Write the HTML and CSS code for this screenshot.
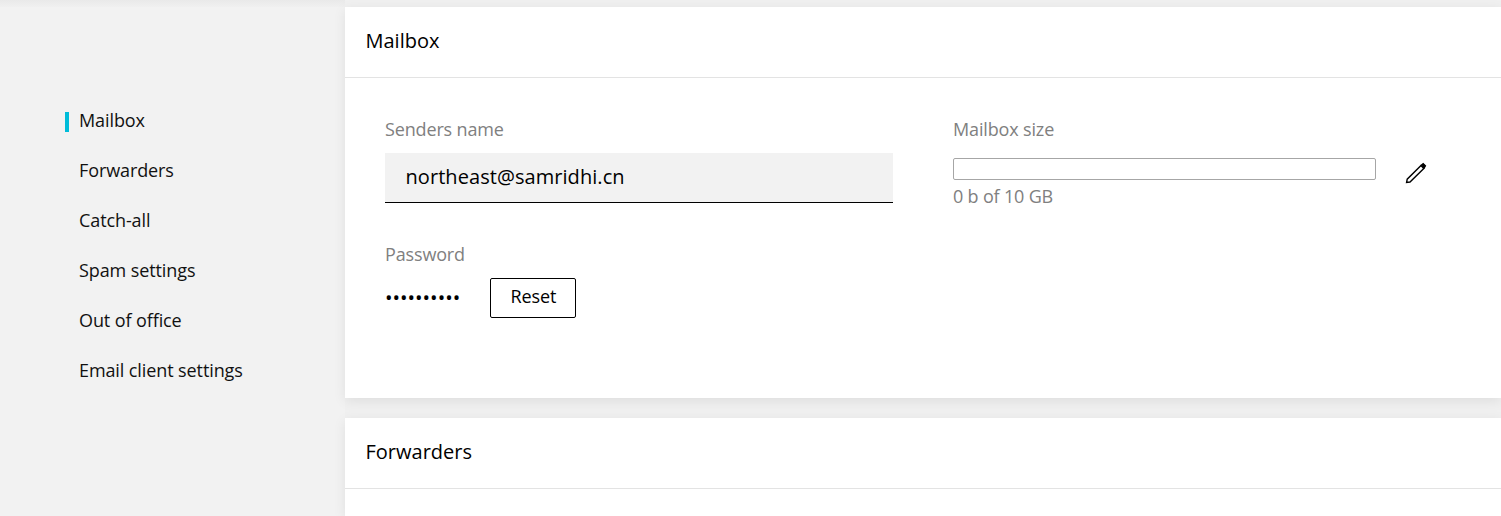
FILE: index.html
```html
<!DOCTYPE html>
<html lang="en">
<head>
<meta charset="utf-8">
<title>Mailbox</title>
<link rel="stylesheet" href="styles.css">
</head>
<body>
<div class="page">
  <nav class="side">
    <a class="nav-item active">Mailbox</a>
    <a class="nav-item">Forwarders</a>
    <a class="nav-item">Catch-all</a>
    <a class="nav-item">Spam settings</a>
    <a class="nav-item">Out of office</a>
    <a class="nav-item">Email client settings</a>
  </nav>
  <main class="main">
    <section class="card card-mailbox">
      <h2 class="card-title">Mailbox</h2>
      <div class="card-body">
        <div class="col-left">
          <div class="label">Senders name</div>
          <div class="input">northeast@samridhi.cn</div>
          <div class="label label-pass">Password</div>
          <div class="pass-row">
            <span class="dots">••••••••••</span>
            <button class="btn">Reset</button>
          </div>
        </div>
        <div class="col-right">
          <div class="label">Mailbox size</div>
          <div class="size-row">
            <div class="bar"></div>
            <svg class="pencil" width="24" height="24" viewBox="0 0 24 24" fill="none" stroke="#000" stroke-width="1.4">
              <path d="M2.6 21.4 L3.2 18.2 L17 4.6 L19.8 7.4 L6 21 Z"/>
              <path d="M17.6 4 L19.2 2.6 L21.4 4.8 L20.2 6.8 Z" fill="#000"/>
            </svg>
          </div>
          <div class="size-text">0 b of 10 GB</div>
        </div>
      </div>
    </section>
    <section class="card">
      <h2 class="card-title">Forwarders</h2>
    </section>
  </main>
</div>
</body>
</html>
```
FILE: styles.css
```css
* { box-sizing: border-box; }
html, body { margin: 0; height: 516px; overflow: hidden; }
body {
  font-family: "Open Sans", "Noto Sans", sans-serif;
  background: #f2f2f2;
  color: #000;
}
.page { display: flex; height: 516px; position: relative; overflow: hidden; }
.page::before {
  content: "";
  position: absolute;
  inset: 0 0 auto 0;
  height: 7px;
  background: linear-gradient(#e9e9e9, #f0f0f0);
}
.side {
  width: 345px;
  flex: none;
  padding: 95px 0 0 65px;
  display: flex;
  flex-direction: column;
}
.nav-item {
  display: block;
  height: 50px;
  line-height: 50px;
  padding-left: 14px;
  font-size: 18px;
  letter-spacing: -0.1px;
  color: #111;
  position: relative;
}
.nav-item.active::before {
  content: "";
  position: absolute;
  left: 0;
  top: 17px;
  width: 4px;
  height: 20px;
  background: #00bcd9;
}
.main {
  flex: 1;
  min-width: 0;
  padding-top: 7px;
  display: flex;
  flex-direction: column;
  gap: 20px;
  background: #f0f0f0;
  position: relative;
}
.card {
  background: #fff;
  box-shadow: 0 3px 12px rgba(0, 0, 0, 0.08);
  flex: none;
  height: 98px;
}
.card-mailbox { height: 391px; }
.card-title {
  margin: 0;
  height: 71px;
  line-height: 67px;
  padding-left: 20.5px;
  font-size: 20px;
  font-weight: 400;
  border-bottom: 1px solid #e3e3e3;
}
.card-body { display: flex; padding: 36px 0 0 40px; }
.col-left { width: 508px; flex: none; }
.col-right { margin-left: 60px; width: 480px; }
.label {
  font-size: 18px;
  line-height: 30px;
  letter-spacing: -0.15px;
  color: #808080;
}
.input {
  margin-top: 9px;
  height: 50px;
  line-height: 47px;
  padding-left: 20.5px;
  background: #f2f2f2;
  border-bottom: 1px solid #000;
  font-size: 20px;
  letter-spacing: 0.06px;
}
.label-pass { margin-top: 36px; }
.pass-row {
  display: flex;
  align-items: center;
  margin-top: 9px;
}
.dots { font-size: 20px; width: 105px; padding-bottom: 2px; flex: none; }
.btn {
  width: 86px;
  height: 40px;
  padding: 0 0 4px 1px;
  background: #fff;
  border: 1px solid #000;
  border-radius: 2px;
  font: 400 18px "Open Sans", "Noto Sans", sans-serif;
  letter-spacing: -0.1px;
  color: #000;
}
.size-row { display: flex; align-items: center; margin-top: 9px; height: 32px; }
.bar {
  width: 423px;
  height: 22px;
  border: 1px solid #a6a6a6;
  border-radius: 2px;
  background: #fff;
}
.pencil { margin: 8px 0 0 28px; flex: none; }
.size-text {
  font-size: 18px;
  line-height: 22px;
  letter-spacing: -0.18px;
  color: #808080;
}
```
